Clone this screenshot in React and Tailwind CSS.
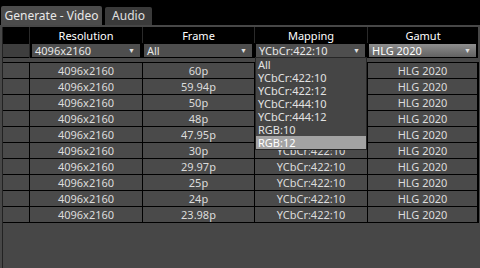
import React from 'react';

const frames = ['60p', '59.94p', '50p', '48p', '47.95p', '30p', '29.97p', '25p', '24p', '23.98p'];
const mappings = ['All', 'YCbCr:422:10', 'YCbCr:422:12', 'YCbCr:444:10', 'YCbCr:444:12', 'RGB:10', 'RGB:12'];

const cols = 'grid grid-cols-[26px_113px_112px_113px_111px]';

const Arrow = () => <span className="text-[7px] text-[#e0e0e0] leading-none">▼</span>;

const Select = ({ value, tone }) => {
  const bg =
    tone === 'focus'
      ? 'bg-gradient-to-b from-[#8e8e8e] to-[#626262] text-white'
      : 'bg-[#4e4e4e] text-[#e6e6e6]';
  return (
    <div className={`mx-[2px] h-[13px] flex items-center justify-between pl-[3px] pr-[5px] ${bg}`}>
      <span>{value}</span>
      <Arrow />
    </div>
  );
};

export default function App() {
  return (
    <div className="w-[480px] h-[268px] bg-black overflow-hidden relative text-[11px] leading-none font-['Noto_Sans',sans-serif]">
      <div className="h-[25px] flex items-end gap-[3px] pl-[1px]">
        <div className="h-[19px] w-[101px] bg-[#4b4b4b] rounded-t-[2px] flex items-center justify-center text-[12px] text-[#e8e8e8]">
          Generate - Video
        </div>
        <div className="h-[18px] w-[47px] bg-[#3a3a3a] rounded-t-[2px] flex items-center justify-center text-[12px] text-[#e0e0e0]">
          Audio
        </div>
      </div>

      <div className="h-[243px] bg-[#474747] pl-[2px] pt-[2px]">
        <div className="h-full border-l border-[#222] pr-[2px]">
          <div className={`${cols} bg-black`}>
            {['', 'Resolution', 'Frame', 'Mapping', 'Gamut'].map((h, i) => (
              <div
                key={i}
                className={`h-[16px] flex items-center justify-center text-white ${i > 0 ? 'border-l border-[#2a2a2a]' : ''}`}
              >
                {h}
              </div>
            ))}
            <div className="h-[15px] bg-[#3e3e3e] border-y border-black" />
            <div className="h-[15px] flex items-center border-l border-[#2a2a2a]">
              <div className="w-full"><Select value="4096x2160" /></div>
            </div>
            <div className="h-[15px] flex items-center">
              <div className="w-full"><Select value="All" /></div>
            </div>
            <div className="h-[15px] flex items-center">
              <div className="w-full"><Select value="YCbCr:422:10" /></div>
            </div>
            <div className="h-[15px] flex items-center">
              <div className="w-full"><Select value="HLG 2020" tone="focus" /></div>
            </div>
          </div>

          <div className={`${cols} gap-y-px bg-black border-y border-black mt-[4px] w-[476px]`}>
            {frames.map((f, i) => (
              <React.Fragment key={f}>
                <div className="h-[15px] bg-[#4a4a4a]" />
                <div className="h-[15px] bg-[#4a4a4a] border-l border-black flex items-center justify-center text-[#dcdcdc]">4096x2160</div>
                <div className="h-[15px] bg-[#4a4a4a] border-l border-black flex items-center justify-center text-[#dcdcdc]">{f}</div>
                <div className="h-[15px] bg-[#4a4a4a] border-l border-black flex items-center justify-center text-[#dcdcdc]">
                  {i >= 5 ? 'YCbCr:422:10' : ''}
                </div>
                <div className="h-[15px] bg-[#4a4a4a] border-x border-black flex items-center justify-center text-[#dcdcdc]">HLG 2020</div>
              </React.Fragment>
            ))}
          </div>
        </div>
      </div>

      <div className="absolute left-[255px] top-[57px] w-[112px] bg-[#454545] border border-[#262626] flex flex-col">
        {mappings.map((m) => (
          <div
            key={m}
            className={`h-[13px] flex items-center pl-[2px] ${m === 'RGB:12' ? 'bg-[#a3a3a3] text-white' : 'text-[#e2e2e2]'}`}
          >
            {m}
          </div>
        ))}
      </div>
    </div>
  );
}
